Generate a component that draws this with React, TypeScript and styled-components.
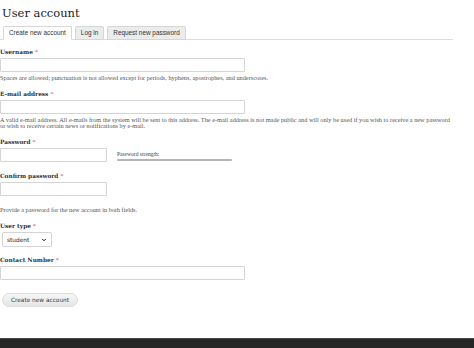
import React from "react";
import styled, { createGlobalStyle } from "styled-components";
import { ChevronDown } from "lucide-react";

const GlobalStyle = createGlobalStyle`
  html, body {
    margin: 0;
    padding: 0;
    background: #fff;
  }
  body {
    font-family: "DejaVu Serif", Georgia, serif;
    color: #3b3b3b;
  }
`;

const Page = styled.div`
  width: 474px;
  min-height: 348px;
  display: flex;
  flex-direction: column;
`;

const Main = styled.main`
  width: 474px;
`;

const Title = styled.h1`
  margin: 0;
  padding: 5px 0 0 2px;
  font-family: "DejaVu Serif", Georgia, serif;
  font-weight: normal;
  font-size: 11.5px;
  line-height: 16px;
  color: #222;
`;

const Tabs = styled.ul`
  display: flex;
  align-items: flex-end;
  gap: 3px;
  width: 450px;
  margin: 5px 0 0;
  padding: 0 0 0 3px;
  list-style: none;
  border-bottom: 1px solid #dcdcdc;
`;

const Tab = styled.li<{ $active?: boolean }>`
  height: 12px;
  padding: 0 5px;
  margin-bottom: -1px;
  font-family: "Liberation Sans", Arial, sans-serif;
  font-size: 6.4px;
  line-height: 12px;
  color: #333;
  background: ${(p) => (p.$active ? "#fff" : "#ececec")};
  border: 1px solid #d6d6d6;
  border-bottom-color: ${(p) => (p.$active ? "#fff" : "#d6d6d6")};
  border-radius: 2px 2px 0 0;
`;

const Form = styled.form`
  margin-top: 8px;
`;

const Item = styled.div<{ $gap?: number }>`
  margin-bottom: ${(p) => p.$gap ?? 8.5}px;
`;

const Label = styled.label`
  display: block;
  margin-bottom: 2px;
  font-family: "DejaVu Serif", Georgia, serif;
  font-weight: bold;
  font-size: 5.8px;
  line-height: 8px;
  color: #333;
`;

const Required = styled.span`
  color: #e0506a;
  font-weight: normal;
`;

const Input = styled.input<{ $width: number }>`
  display: block;
  box-sizing: border-box;
  width: ${(p) => p.$width}px;
  height: 14px;
  margin: 0;
  padding: 0 3px;
  border: 1px solid #d4d4d4;
  border-radius: 1px;
  background: #fff;
  font-size: 6px;
`;

const Description = styled.div<{ $top?: number }>`
  max-width: 451px;
  margin-top: ${(p) => p.$top ?? 3}px;
  font-family: "Liberation Serif", "Times New Roman", serif;
  font-size: 6.3px;
  line-height: 6.4px;
  color: #555;
`;

const PasswordRow = styled.div`
  display: flex;
  align-items: flex-start;
  gap: 10px;
`;

const Strength = styled.div`
  width: 115px;
  padding-top: 3px;
`;

const StrengthText = styled.div`
  font-family: "Liberation Serif", "Times New Roman", serif;
  font-size: 5.6px;
  line-height: 6px;
  color: #444;
`;

const StrengthBar = styled.div`
  height: 2px;
  margin-top: 2px;
  background: #b4b4b4;
  border-radius: 1px;
`;

const SelectWrap = styled.div`
  position: relative;
  width: 50px;
  margin-left: 2px;
`;

const Select = styled.select`
  display: block;
  box-sizing: border-box;
  width: 50px;
  height: 15px;
  margin: 0;
  padding: 0 0 0 4px;
  appearance: none;
  border: 1px solid #d4d4d4;
  border-radius: 2px;
  background: #fff;
  font-family: "DejaVu Sans", Arial, sans-serif;
  font-size: 5.8px;
  color: #222;
`;

const Chevron = styled(ChevronDown)`
  position: absolute;
  right: 5px;
  top: 5px;
  pointer-events: none;
`;

const Button = styled.button`
  display: block;
  box-sizing: border-box;
  width: 76px;
  height: 14px;
  margin: 13px 0 0 2px;
  padding: 0;
  font-family: "DejaVu Sans", Verdana, sans-serif;
  font-size: 5.8px;
  color: #3a3a3a;
  background: linear-gradient(#f6f6f6, #e6e6e6);
  border: 1px solid #dedede;
  border-radius: 8px;
`;

const Footer = styled.footer`
  flex: 1;
  min-height: 9px;
  margin-top: 31px;
  background: #262626;
  border-top: 1px solid #4a4a4a;
`;

export default function App() {
  return (
    <Page>
      <GlobalStyle />
      <Main>
        <Title>User account</Title>
        <Tabs>
          <Tab $active>Create new account</Tab>
          <Tab>Log in</Tab>
          <Tab>Request new password</Tab>
        </Tabs>
        <Form>
          <Item>
            <Label>
              Username <Required>*</Required>
            </Label>
            <Input $width={245} />
            <Description>
              Spaces are allowed; punctuation is not allowed except for periods, hyphens, apostrophes, and underscores.
            </Description>
          </Item>
          <Item>
            <Label>
              E-mail address <Required>*</Required>
            </Label>
            <Input $width={245} />
            <Description>
              A valid e-mail address. All e-mails from the system will be sent to this address. The e-mail address is not
              made public and will only be used if you wish to receive a new password or wish to receive certain news or
              notifications by e-mail.
            </Description>
          </Item>
          <Item $gap={10}>
            <Label>
              Password <Required>*</Required>
            </Label>
            <PasswordRow>
              <Input $width={107} type="password" />
              <Strength>
                <StrengthText>Password strength:</StrengthText>
                <StrengthBar />
              </Strength>
            </PasswordRow>
          </Item>
          <Item>
            <Label>
              Confirm password <Required>*</Required>
            </Label>
            <Input $width={107} type="password" />
            <Description $top={11}>Provide a password for the new account in both fields.</Description>
          </Item>
          <Item>
            <Label>
              User type <Required>*</Required>
            </Label>
            <SelectWrap>
              <Select defaultValue="student">
                <option value="student">student</option>
              </Select>
              <Chevron size={6} strokeWidth={4} color="#111" />
            </SelectWrap>
          </Item>
          <Item>
            <Label>
              Contact Number <Required>*</Required>
            </Label>
            <Input $width={245} />
          </Item>
          <Button type="button">Create new account</Button>
        </Form>
      </Main>
      <Footer />
    </Page>
  );
}
